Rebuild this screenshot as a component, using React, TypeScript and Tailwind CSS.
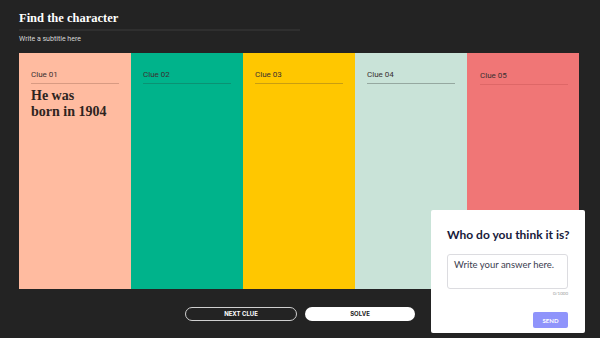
import React from "react"

const clues = [
  { label: "Clue 01", bg: "bg-[#ffbba0]", line: "border-[#d89a82]", pad: "px-[12px] pt-[17px]", text: ["He was", "born in 1904"] },
  { label: "Clue 02", bg: "bg-[#00b38b]", line: "border-[#0a9273]", pad: "px-[12px] pt-[17px]" },
  { label: "Clue 03", bg: "bg-[#ffc700]", line: "border-[#c99e10]", pad: "px-[12px] pt-[17px]" },
  { label: "Clue 04", bg: "bg-[#c9e3d8]", line: "border-[#95a8a0]", pad: "px-[12px] pt-[17px]" },
  { label: "Clue 05", bg: "bg-[#f07676]", line: "border-[#de6767]", pad: "pl-[13px] pr-[11px] pt-[18px]" },
]

export default function App() {
  return (
    <div className="relative w-[600px] h-[338px] overflow-hidden bg-[#232323] font-['Roboto',sans-serif]">
      <div className="px-[19px] pt-[10px]">
        <div className="w-[281px] border-b-2 border-[#2f2f2f] pb-[2px]">
          <h1 className="text-[12.5px] leading-[17px] font-bold text-white font-['Liberation_Serif',serif]">
            Find the character
          </h1>
        </div>
        <p className="mt-[4px] text-[7px] leading-[9px] text-[#d8d8d8]">Write a subtitle here</p>

        <div className="mt-[9px] flex h-[236px]">
          {clues.map((c) => (
            <div key={c.label} className={`w-[112px] ${c.bg} ${c.pad}`}>
              <div className={`border-b ${c.line} pb-[3px] text-[8px] leading-[10px] text-[#3a3030]`}>
                {c.label}
              </div>
              {c.text && (
                <p className="mt-[4px] text-[14px] leading-[16px] font-bold text-[#2e2421] font-['Liberation_Serif',serif]">
                  {c.text[0]}
                  <br />
                  {c.text[1]}
                </p>
              )}
            </div>
          ))}
        </div>

        <div className="mt-[18px] flex justify-center gap-[8px]">
          <button className="w-[112px] h-[14px] rounded-full border border-[#cfcfcf] font-['Inter',sans-serif] text-[6px] font-bold leading-none text-white">
            NEXT CLUE
          </button>
          <button className="w-[110px] h-[14px] rounded-full bg-white font-['Inter',sans-serif] text-[6px] font-bold leading-none text-[#222]">
            SOLVE
          </button>
        </div>
      </div>

      <div className="absolute left-[431px] top-[210px] w-[154px] h-[123px] rounded-[2px] bg-white px-[16px] pt-[18px] font-['Lato',sans-serif]">
        <h2 className="whitespace-nowrap text-[12px] leading-[14px] font-bold text-[#17193a]">Who do you think it is?</h2>
        <div className="mt-[12px] h-[35px] w-[121px] rounded-[3px] border border-[#dcdce0] px-[6px] pt-[4px] text-[9.5px] leading-[12px] text-[#3b3d4f]">
          Write your answer here.
        </div>
        <div className="mt-[2px] w-[121px] text-right text-[4.5px] leading-[6px] text-[#9a9a9a]">0/1000</div>
        <div className="mt-[15px] flex w-[121px] justify-end">
          <button className="h-[16px] w-[35px] rounded-[2px] bg-[#8f94fb] text-[6px] font-bold text-white">SEND</button>
        </div>
      </div>
    </div>
  )
}
